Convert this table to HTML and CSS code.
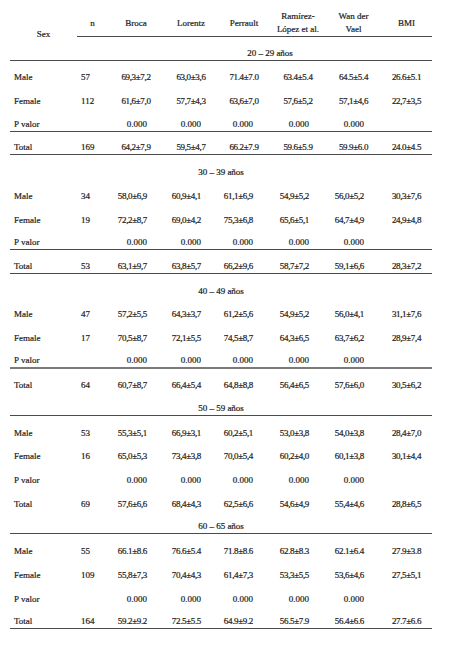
FILE: index.html
```html
<!DOCTYPE html>
<html lang="es">
<head>
<meta charset="utf-8">
<title>Tabla</title>
<link rel="stylesheet" href="styles.css">
</head>
<body>
<table class="tbl">
  <colgroup>
    <col class="w-sex"><col class="w-n"><col class="w-broca"><col class="w-lor"><col class="w-per"><col class="w-ram"><col class="w-wan"><col class="w-bmi">
  </colgroup>
  <thead>
    <tr class="hdr">
      <th rowspan="2" class="sex">Sex</th>
      <th class="hb">n</th>
      <th class="hb">Broca</th>
      <th class="hb">Lorentz</th>
      <th class="hb">Perrault</th>
      <th class="hb">Ramírez-<br>López et al.</th>
      <th class="hb">Wan der<br>Vael</th>
      <th class="hb">BMI</th>
    </tr>
    <tr class="row rule">
      <td colspan="7" class="ttl ttl-first">20 – 29 años</td>
    </tr>
  </thead>
  <tbody class="s-center">
    <tr class="row"><td class="lab">Male</td><td class="n">57</td><td class="v">69,3±7,2</td><td class="v">63,0±3,6</td><td class="v">71.4±7.0</td><td class="v">63.4±5.4</td><td class="v">64.5±5.4</td><td class="v bmi">26.6±5.1</td></tr>
    <tr class="row"><td class="lab">Female</td><td class="n">112</td><td class="v">61,6±7,0</td><td class="v">57,7±4,3</td><td class="v">63,6±7,0</td><td class="v">57,6±5,2</td><td class="v">57,1±4,6</td><td class="v bmi">22,7±3,5</td></tr>
    <tr class="row rule"><td class="lab">P valor</td><td></td><td class="p">0.000</td><td class="p">0.000</td><td class="p">0.000</td><td class="p">0.000</td><td class="p">0.000</td><td></td></tr>
    <tr class="row rule"><td class="lab">Total</td><td class="n">169</td><td class="v">64,2±7,9</td><td class="v">59,5±4,7</td><td class="v">66.2±7.9</td><td class="v">59.6±5.9</td><td class="v">59.9±6.0</td><td class="v bmi">24.0±4.5</td></tr>
  </tbody>
  <tbody class="s-right">
    <tr class="row"><td colspan="8" class="ttl">30 – 39 años</td></tr>
    <tr class="row"><td class="lab">Male</td><td class="n">34</td><td class="v">58,0±6,9</td><td class="v">60,9±4,1</td><td class="v">61,1±6,9</td><td class="v">54,9±5,2</td><td class="v">56,0±5,2</td><td class="v bmi">30,3±7,6</td></tr>
    <tr class="row"><td class="lab">Female</td><td class="n">19</td><td class="v">72,2±8,7</td><td class="v">69,0±4,2</td><td class="v">75,3±6,8</td><td class="v">65,6±5,1</td><td class="v">64,7±4,9</td><td class="v bmi">24,9±4,8</td></tr>
    <tr class="row rule"><td class="lab">P valor</td><td></td><td class="p">0.000</td><td class="p">0.000</td><td class="p">0.000</td><td class="p">0.000</td><td class="p">0.000</td><td></td></tr>
    <tr class="row rule"><td class="lab">Total</td><td class="n">53</td><td class="v">63,1±9,7</td><td class="v">63,8±5,7</td><td class="v">66,2±9,6</td><td class="v">58,7±7,2</td><td class="v">59,1±6,6</td><td class="v bmi">28,3±7,2</td></tr>
  </tbody>
  <tbody class="s-right">
    <tr class="row"><td colspan="8" class="ttl">40 – 49 años</td></tr>
    <tr class="row"><td class="lab">Male</td><td class="n">47</td><td class="v">57,2±5,5</td><td class="v">64,3±3,7</td><td class="v">61,2±5,6</td><td class="v">54,9±5,2</td><td class="v">56,0±4,1</td><td class="v bmi">31,1±7,6</td></tr>
    <tr class="row"><td class="lab">Female</td><td class="n">17</td><td class="v">70,5±8,7</td><td class="v">72,1±5,5</td><td class="v">74,5±8,7</td><td class="v">64,3±6,5</td><td class="v">63,7±6,2</td><td class="v bmi">28,9±7,4</td></tr>
    <tr class="row rule-thick"><td class="lab">P valor</td><td></td><td class="p">0.000</td><td class="p">0.000</td><td class="p">0.000</td><td class="p">0.000</td><td class="p">0.000</td><td></td></tr>
    <tr class="row"><td class="lab">Total</td><td class="n">64</td><td class="v">60,7±8,7</td><td class="v">66,4±5,4</td><td class="v">64,8±8,8</td><td class="v">56,4±6,5</td><td class="v">57,6±6,0</td><td class="v bmi">30,5±6,2</td></tr>
  </tbody>
  <tbody class="s-right">
    <tr class="row rule"><td colspan="8" class="ttl">50 – 59 años</td></tr>
    <tr class="row"><td class="lab">Male</td><td class="n">53</td><td class="v">55,3±5,1</td><td class="v">66,9±3,1</td><td class="v">60,2±5,1</td><td class="v">53,0±3,8</td><td class="v">54,0±3,8</td><td class="v bmi">28,4±7,0</td></tr>
    <tr class="row"><td class="lab">Female</td><td class="n">16</td><td class="v">65,0±5,3</td><td class="v">73,4±3,8</td><td class="v">70,0±5,4</td><td class="v">60,2±4,0</td><td class="v">60,1±3,8</td><td class="v bmi">30,1±4,4</td></tr>
    <tr class="row"><td class="lab">P valor</td><td></td><td class="p">0.000</td><td class="p">0.000</td><td class="p">0.000</td><td class="p">0.000</td><td class="p">0.000</td><td></td></tr>
    <tr class="row"><td class="lab">Total</td><td class="n">69</td><td class="v">57,6±6,6</td><td class="v">68,4±4,3</td><td class="v">62,5±6,6</td><td class="v">54,6±4,9</td><td class="v">55,4±4,6</td><td class="v bmi">28,8±6,5</td></tr>
  </tbody>
  <tbody class="s-right">
    <tr class="row rule"><td colspan="8" class="ttl">60 – 65 años</td></tr>
    <tr class="row"><td class="lab">Male</td><td class="n">55</td><td class="v">66.1±8.6</td><td class="v">76.6±5.4</td><td class="v">71.8±8.6</td><td class="v">62.8±8.3</td><td class="v">62.1±6.4</td><td class="v bmi">27.9±3.8</td></tr>
    <tr class="row"><td class="lab">Female</td><td class="n">109</td><td class="v">55,8±7,3</td><td class="v">70,4±4,3</td><td class="v">61,4±7,3</td><td class="v">53,3±5,5</td><td class="v">53,6±4,6</td><td class="v bmi">27,5±5,1</td></tr>
    <tr class="row"><td class="lab">P valor</td><td></td><td class="p">0.000</td><td class="p">0.000</td><td class="p">0.000</td><td class="p">0.000</td><td class="p">0.000</td><td></td></tr>
    <tr class="row rule"><td class="lab">Total</td><td class="n">164</td><td class="v">59.2±9.2</td><td class="v">72.5±5.5</td><td class="v">64.9±9.2</td><td class="v">56.5±7.9</td><td class="v">56.4±6.6</td><td class="v bmi">27.7±6.6</td></tr>
  </tbody>
</table>
</body>
</html>
```

FILE: styles.css
```css
html, body {
  margin: 0;
  padding: 0;
  background: #ffffff;
}

.tbl {
  margin: 8px 0 0 10px;
  width: 422px;
  table-layout: fixed;
  border-collapse: separate;
  border-spacing: 0;
  font-family: "Liberation Serif", "Times New Roman", serif;
  font-size: 9px;
  color: #1a1a1a;
  -webkit-text-stroke: 0.2px #1a1a1a;
}

.w-sex { width: 67px; }
.w-n { width: 31px; }
.w-broca { width: 56px; }
.w-lor { width: 54px; }
.w-per { width: 52px; }
.w-ram { width: 56px; }
.w-wan { width: 55px; }
.w-bmi { width: 51px; }

.tbl th,
.tbl td {
  padding: 0 0 2px 0;
  line-height: 10px;
  vertical-align: bottom;
  font-weight: normal;
  white-space: nowrap;
  box-sizing: border-box;
}

.hdr {
  height: 28px;
}

.hdr th {
  padding: 2px 0 0 0;
  line-height: 13px;
  vertical-align: middle;
  text-align: center;
}

.hdr th.hb {
  border-bottom: 1px solid #4a4a4a;
}

.hdr th.sex {
  padding-top: 2px;
  vertical-align: middle;
  text-align: center;
  border-bottom: 1px solid #4a4a4a;
}

.row {
  height: 23.7px;
}

.rule td {
  border-bottom: 1px solid #4a4a4a;
}

.rule-thick td {
  border-bottom: 2px solid #7a7a7a;
}

.ttl {
  text-align: center;
}

.ttl-first {
  padding-left: 31px !important;
}

.lab {
  padding-left: 4px !important;
  text-align: left;
}

.n {
  padding-left: 4px !important;
  text-align: left;
}

.v {
  letter-spacing: -0.35px;
}

.s-center .v {
  text-align: center;
}

.s-right .v {
  text-align: right;
  padding-right: 17px !important;
}

.tbl .bmi {
  text-align: center;
  padding-right: 0 !important;
}

.p {
  text-align: right;
  padding-right: 17px !important;
}
```
